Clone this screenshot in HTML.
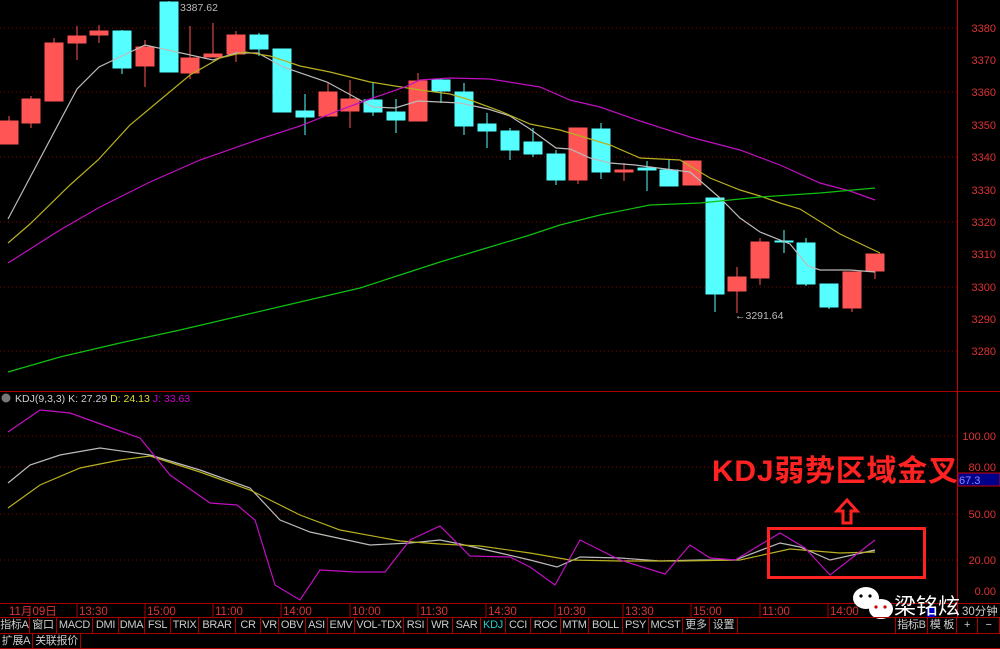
<!DOCTYPE html>
<html><head><meta charset="utf-8"><style>
html,body{margin:0;padding:0;background:#000;width:1000px;height:649px;overflow:hidden;font-family:"Liberation Sans","Noto Sans CJK SC",sans-serif}
svg{position:absolute;left:0;top:0}
.tb{position:absolute;top:617px;height:16px;left:0;width:1000px}
.b{position:absolute;top:0;height:16px;line-height:16px;font-size:11px;color:#ccc;text-align:center;border-right:1px solid #a00;box-sizing:border-box;white-space:nowrap;overflow:hidden;letter-spacing:-0.3px}
</style></head><body>
<svg width="1000" height="649" font-family="Liberation Sans, Noto Sans CJK SC, sans-serif">
<g stroke="#8b0000" stroke-dasharray="1,3" stroke-width="1">
<line x1="0" y1="28" x2="957" y2="28"/><line x1="0" y1="92" x2="957" y2="92"/><line x1="0" y1="157" x2="957" y2="157"/><line x1="0" y1="222" x2="957" y2="222"/><line x1="0" y1="287" x2="957" y2="287"/><line x1="0" y1="351" x2="957" y2="351"/>
<line x1="0" y1="436" x2="957" y2="436"/><line x1="0" y1="467" x2="957" y2="467"/><line x1="0" y1="514" x2="957" y2="514"/><line x1="0" y1="560" x2="957" y2="560"/>
</g>
<line x1="957.5" y1="0" x2="957.5" y2="617" stroke="#c00"/>
<line x1="0" y1="391.5" x2="1000" y2="391.5" stroke="#a00"/>
<line x1="0" y1="603.5" x2="1000" y2="603.5" stroke="#a00"/>
<g fill="#d33" font-size="11" text-anchor="end">
<text x="996" y="32">3380</text><text x="996" y="64">3370</text><text x="996" y="96">3360</text><text x="996" y="129">3350</text><text x="996" y="161">3340</text><text x="996" y="194">3330</text><text x="996" y="226">3320</text><text x="996" y="258">3310</text><text x="996" y="291">3300</text><text x="996" y="323">3290</text><text x="996" y="355">3280</text>
<text x="996" y="440">100.00</text><text x="996" y="471">80.00</text><text x="996" y="518">50.00</text><text x="996" y="564">20.00</text><text x="996" y="595">0.00</text>
</g>
<rect x="958" y="473" width="42" height="13" fill="#00008b" stroke="#c00"/>
<text x="959" y="484" fill="#88f" font-size="11">67.3</text>
<g stroke-width="1">
<g stroke="#ff5555" fill="#ff5555">
<line x1="9" y1="116" x2="9" y2="144"/><rect x="0" y="121" width="18" height="23"/>
<line x1="31" y1="96" x2="31" y2="128"/><rect x="22" y="99" width="18" height="24"/>
<line x1="54" y1="38" x2="54" y2="101"/><rect x="45" y="43" width="18" height="58"/>
<line x1="77" y1="26" x2="77" y2="60"/><rect x="68" y="36" width="18" height="7"/>
<line x1="99" y1="25" x2="99" y2="43"/><rect x="90" y="31" width="18" height="4"/>
<line x1="145" y1="40" x2="145" y2="87"/><rect x="136" y="47" width="18" height="19"/>
<line x1="190" y1="26" x2="190" y2="79"/><rect x="181" y="58" width="18" height="15"/>
<line x1="213" y1="23" x2="213" y2="57"/><rect x="204" y="54" width="18" height="3"/>
<line x1="236" y1="31" x2="236" y2="62"/><rect x="227" y="35" width="18" height="19"/>
<line x1="328" y1="83" x2="328" y2="117"/><rect x="319" y="92" width="18" height="24"/>
<line x1="350" y1="80" x2="350" y2="128"/><rect x="341" y="99" width="18" height="12"/>
<line x1="418" y1="73" x2="418" y2="121"/><rect x="409" y="81" width="18" height="40"/>
<line x1="578" y1="128" x2="578" y2="184"/><rect x="569" y="128" width="18" height="52"/>
<line x1="624" y1="163" x2="624" y2="181"/><rect x="615" y="170" width="18" height="2"/>
<line x1="692" y1="161" x2="692" y2="185"/><rect x="683" y="161" width="18" height="24"/>
<line x1="737" y1="267" x2="737" y2="313"/><rect x="728" y="277" width="18" height="14"/>
<line x1="760" y1="238" x2="760" y2="285"/><rect x="751" y="242" width="18" height="36"/>
<line x1="852" y1="272" x2="852" y2="312"/><rect x="843" y="272" width="18" height="36"/>
<line x1="875" y1="254" x2="875" y2="279"/><rect x="866" y="254" width="18" height="17"/>
</g>
<g stroke="#55ffff" fill="#55ffff">
<line x1="122" y1="30" x2="122" y2="74"/><rect x="113" y="31" width="18" height="37"/>
<line x1="169" y1="1" x2="169" y2="72"/><rect x="160" y="2" width="18" height="70"/>
<line x1="259" y1="33" x2="259" y2="56"/><rect x="250" y="35" width="18" height="14"/>
<line x1="282" y1="49" x2="282" y2="112"/><rect x="273" y="49" width="18" height="63"/>
<line x1="305" y1="94" x2="305" y2="135"/><rect x="296" y="111" width="18" height="6"/>
<line x1="373" y1="82" x2="373" y2="116"/><rect x="364" y="100" width="18" height="12"/>
<line x1="396" y1="99" x2="396" y2="133"/><rect x="387" y="112" width="18" height="8"/>
<line x1="441" y1="78" x2="441" y2="103"/><rect x="432" y="80" width="18" height="11"/>
<line x1="464" y1="83" x2="464" y2="135"/><rect x="455" y="92" width="18" height="34"/>
<line x1="487" y1="113" x2="487" y2="148"/><rect x="478" y="124" width="18" height="7"/>
<line x1="510" y1="128" x2="510" y2="160"/><rect x="501" y="131" width="18" height="19"/>
<line x1="533" y1="128" x2="533" y2="157"/><rect x="524" y="142" width="18" height="12"/>
<line x1="556" y1="150" x2="556" y2="185"/><rect x="547" y="154" width="18" height="26"/>
<line x1="601" y1="123" x2="601" y2="179"/><rect x="592" y="129" width="18" height="43"/>
<line x1="647" y1="161" x2="647" y2="191"/><rect x="638" y="168" width="18" height="2"/>
<line x1="669" y1="160" x2="669" y2="186"/><rect x="660" y="170" width="18" height="16"/>
<line x1="715" y1="198" x2="715" y2="312"/><rect x="706" y="198" width="18" height="96"/>
<line x1="784" y1="230" x2="784" y2="253"/><rect x="775" y="241" width="18" height="1"/>
<line x1="806" y1="238" x2="806" y2="286"/><rect x="797" y="243" width="18" height="41"/>
<line x1="829" y1="284" x2="829" y2="309"/><rect x="820" y="284" width="18" height="23"/>
</g>
</g>
<g fill="none" stroke-width="1.2">
<polyline stroke="#bbb" points="8,219 77,89 99,67 145,45 213,60 236,53 258,53 283,67 327,82 360,100 373,107 395,108 418,101 440,102 460,103 488,109 510,116 530,129 556,148 570,149 590,158 610,163 635,165 658,168 690,172 720,198 740,218 760,232 790,244 808,266 820,270 850,270 875,272"/>
<polyline stroke="#b8b020" points="8,243 30,224 70,185 98,160 130,125 160,100 190,75 220,58 245,52 270,56 300,66 330,72 370,82 395,86 420,90 450,94 470,100 500,111 530,124 560,130 580,136 610,145 640,158 680,160 710,178 740,190 760,196 780,203 800,209 840,234 880,253"/>
<polyline stroke="#c010c0" points="8,263 60,230 100,207 150,182 200,160 260,139 300,126 340,110 370,99 405,87 420,80 450,78 490,79 540,87 570,100 600,107 640,121 690,137 740,150 780,165 820,183 850,191 875,200"/>
<polyline stroke="#10c010" points="8,372 60,357 120,343 180,330 240,316 300,302 360,288 400,275 440,262 480,250 530,235 560,225 600,215 650,205 700,203 760,197 820,193 875,188"/>
</g>
<text x="180" y="11" fill="#bbb" font-size="10.5">3387.62</text>
<text x="735" y="319" fill="#bbb" font-size="10.5">←3291.64</text>
<circle cx="6" cy="398" r="4.5" fill="#777"/>
<text x="15" y="402" font-size="10.5" fill="#ccc">KDJ(9,3,3) K: 27.29 <tspan fill="#dd3">D: 24.13</tspan> <tspan fill="#c0c">J: 33.63</tspan></text>
<g fill="none" stroke-width="1.2">
<polyline stroke="#bbb" points="8,483 30,465 60,455 100,448 150,455 200,470 250,488 280,520 310,532 370,545 410,543 440,540 460,544 500,553 530,560 557,567 580,557 620,558 660,561 700,560 735,560 780,543 800,547 830,560 875,550"/>
<polyline stroke="#b8b020" points="8,508 40,485 80,468 120,460 150,456 200,472 250,490 300,515 340,530 400,541 440,544 480,546 530,553 570,560 620,561 680,561 740,560 790,549 840,553 875,552"/>
<polyline stroke="#c010c0" points="8,432 40,410 70,413 120,431 140,438 170,475 210,503 237,505 255,520 275,585 300,600 320,570 355,572 385,572 410,540 440,526 470,556 510,557 530,567 555,585 580,540 620,560 665,574 690,545 710,558 735,560 780,533 805,548 830,575 875,540"/>
</g>
<text x="712" y="481" fill="#f22" font-size="30" font-weight="bold" textLength="246" font-family="Liberation Sans, Noto Sans CJK SC, sans-serif">KDJ弱势区域金叉</text>
<path d="M847,500 L857,511 L851,511 L851,523 L843,523 L843,511 L837,511 Z" fill="none" stroke="#f22" stroke-width="3"/>
<rect x="768.5" y="528.5" width="156" height="49" fill="none" stroke="#f22" stroke-width="3"/>
<g stroke="#a00"><line x1="77" y1="603" x2="77" y2="617"/><line x1="145" y1="603" x2="145" y2="617"/><line x1="213" y1="603" x2="213" y2="617"/><line x1="281" y1="603" x2="281" y2="617"/><line x1="350" y1="603" x2="350" y2="617"/><line x1="418" y1="603" x2="418" y2="617"/><line x1="486" y1="603" x2="486" y2="617"/><line x1="555" y1="603" x2="555" y2="617"/><line x1="623" y1="603" x2="623" y2="617"/><line x1="691" y1="603" x2="691" y2="617"/><line x1="760" y1="603" x2="760" y2="617"/><line x1="828" y1="603" x2="828" y2="617"/></g>
<g fill="#d33" font-size="11.5">
<text x="9" y="615">11月09日</text><text x="79" y="615">13:30</text><text x="147" y="615">15:00</text><text x="215" y="615">11:00</text><text x="283" y="615">14:00</text><text x="352" y="615">10:00</text><text x="420" y="615">11:30</text><text x="488" y="615">14:30</text><text x="557" y="615">10:30</text><text x="625" y="615">13:30</text><text x="693" y="615">15:00</text><text x="762" y="615">11:00</text><text x="830" y="615">14:00</text></g>
<text x="962" y="615" fill="#ccc" font-size="11.5">30分钟</text>
<rect x="927" y="607" width="8" height="10" fill="#00c"/>
<g fill="#fff"><ellipse cx="866" cy="598" rx="13" ry="11"/><ellipse cx="881" cy="609" rx="12" ry="10"/></g>
<g fill="#000"><circle cx="861" cy="596" r="1.6"/><circle cx="870" cy="596" r="1.6"/></g>
<g fill="#c00"><circle cx="876" cy="607" r="1.6"/><circle cx="885" cy="607" r="1.6"/></g>
<text x="894" y="614" fill="#fff" font-size="22" font-family="Noto Sans CJK SC, sans-serif">梁铭炫</text>
<line x1="0" y1="617.5" x2="1000" y2="617.5" stroke="#a00"/>
<line x1="0" y1="633.5" x2="1000" y2="633.5" stroke="#a00"/>
<line x1="0" y1="648.5" x2="1000" y2="648.5" stroke="#a00"/>
</svg>
<div class="tb">
<div class="b" style="left:0;width:30px">指标A</div><div class="b" style="left:30px;width:27px">窗口</div><div class="b" style="left:57px;width:36px">MACD</div><div class="b" style="left:93px;width:26px">DMI</div><div class="b" style="left:119px;width:26px">DMA</div><div class="b" style="left:145px;width:26px">FSL</div><div class="b" style="left:171px;width:28px">TRIX</div><div class="b" style="left:199px;width:37px">BRAR</div><div class="b" style="left:236px;width:25px">CR</div><div class="b" style="left:261px;width:18px">VR</div><div class="b" style="left:279px;width:27px">OBV</div><div class="b" style="left:306px;width:22px">ASI</div><div class="b" style="left:328px;width:27px">EMV</div><div class="b" style="left:355px;width:49px">VOL-TDX</div><div class="b" style="left:404px;width:24px">RSI</div><div class="b" style="left:428px;width:25px">WR</div><div class="b" style="left:453px;width:28px">SAR</div><div class="b" style="left:481px;width:25px;color:#2cc">KDJ</div><div class="b" style="left:506px;width:25px">CCI</div><div class="b" style="left:531px;width:30px">ROC</div><div class="b" style="left:561px;width:28px">MTM</div><div class="b" style="left:589px;width:34px">BOLL</div><div class="b" style="left:623px;width:26px">PSY</div><div class="b" style="left:649px;width:34px">MCST</div><div class="b" style="left:683px;width:27px">更多</div><div class="b" style="left:710px;width:28px">设置</div>
<div class="b" style="left:895px;width:33px;border-left:1px solid #a00">指标B</div><div class="b" style="left:928px;width:29px">模 板</div><div class="b" style="left:957px;width:21px">+</div><div class="b" style="left:978px;width:22px">−</div>
</div>
<div style="position:absolute;top:634px;left:0;height:14px;width:1000px">
<div class="b" style="left:0;width:33px;height:14px;line-height:14px">扩展A</div><div class="b" style="left:33px;width:48px;height:14px;line-height:14px">关联报价</div>
</div>
</body></html>
